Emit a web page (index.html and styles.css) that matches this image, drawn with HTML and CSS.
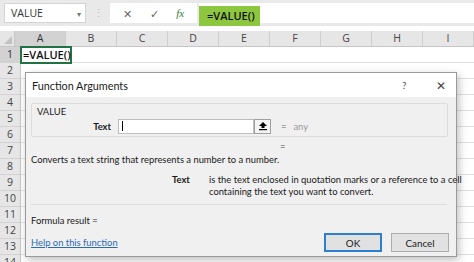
FILE: index.html
```html
<!DOCTYPE html>
<html lang="en">
<head>
    <meta charset="UTF-8">
    <title>Function Arguments</title>
    <link rel="stylesheet" href="styles.css">
</head>
<body>
    <div class="toolbar">
        <div class="namebox">
            <span>VALUE</span>
            <span class="drop">&#9662;</span>
        </div>
        <div class="grip">&#8942;</div>
        <div class="fxbox">
            <span class="ico">&#10005;</span>
            <span class="ico">&#10003;</span>
            <span class="ico fx">fx</span>
        </div>
        <div class="formula">
            <span class="hl">=VALUE()</span>
        </div>
    </div>

    <div class="sheet">
        <div class="colhead">
            <div class="corner"><span class="tri"></span></div>
            <div class="col sel">A</div>
            <div class="col">B</div>
            <div class="col">C</div>
            <div class="col">D</div>
            <div class="col">E</div>
            <div class="col">F</div>
            <div class="col">G</div>
            <div class="col">H</div>
            <div class="col">I</div>
        </div>
        <div class="rows" id="rows"></div>
        <div class="active">=VALUE()</div>

        <div class="dialog">
            <div class="titlebar">
                <span>Function Arguments</span>
                <span class="q">?</span>
                <span class="x">&#10005;</span>
            </div>
            <div class="body">
                <div class="group">
                    <div class="glabel">VALUE</div>
                    <div class="arg">
                        <span class="argname">Text</span>
                        <div class="input"><span class="caret"></span></div>
                        <div class="pick">
                            <svg width="10" height="10" viewBox="0 0 10 10">
                                <path d="M5 1 L9 5 L6.5 5 L6.5 7 L3.5 7 L3.5 5 L1 5 Z" fill="#000"/>
                                <rect x="1" y="8" width="8" height="1.2" fill="#000"/>
                            </svg>
                        </div>
                        <span class="eq">=</span>
                        <span class="any">any</span>
                    </div>
                </div>
                <div class="eq2">=</div>
                <div class="desc">Converts a text string that represents a number to a number.</div>
                <div class="argdesc">
                    <span class="argb">Text</span>
                    <span>is the text enclosed in quotation marks or a reference to a cell<br>containing the text you want to convert.</span>
                </div>
                <div class="sep"></div>
                <div class="result">Formula result =</div>
                <div class="foot">
                    <a href="#" class="help">Help on this function</a>
                    <button class="btn ok">OK</button>
                    <button class="btn">Cancel</button>
                </div>
            </div>
        </div>
    </div>

    <script>
        const rows = document.getElementById('rows');
        for (let i = 1; i <= 14; i++) {
            const r = document.createElement('div');
            r.className = 'row';
            r.innerHTML = `<div class="rowhead${i === 1 ? ' sel' : ''}">${i}</div>`;
            rows.appendChild(r);
        }
    </script>
</body>
</html>
```

FILE: styles.css
```css
body {
    margin: 0;
    width: 474px;
    height: 262px;
    overflow: hidden;
    background: #fff;
    font-family: "Open Sans", "Noto Sans", sans-serif;
    color: #222;
}
.toolbar {
    height: 26px;
    background: #e9e9e9;
    display: flex;
    align-items: flex-start;
    padding-top: 3px;
    box-sizing: border-box;
}
.namebox {
    margin-left: 4px;
    width: 82px;
    height: 20px;
    background: #fff;
    border: 1px solid #d4d4d4;
    box-sizing: border-box;
    display: flex;
    align-items: center;
    justify-content: space-between;
    padding: 0 4px 0 6px;
    font-size: 10.5px;
    color: #333;
}
.drop {
    font-size: 8px;
    color: #777;
}
.grip {
    width: 24px;
    text-align: center;
    color: #bbb;
    font-size: 11px;
    line-height: 20px;
}
.fxbox {
    width: 87px;
    height: 20px;
    background: #fff;
    display: flex;
    align-items: center;
    justify-content: space-around;
    padding: 0 4px;
    box-sizing: border-box;
}
.ico {
    color: #666;
    font-size: 11px;
}
.fx {
    color: #3a7d3a;
    font-style: italic;
    font-family: "Liberation Serif", serif;
    font-size: 11px;
}
.formula {
    flex: 1;
    height: 20px;
    margin-left: 2px;
    background: #fff;
}
.hl {
    display: inline-block;
    height: 20px;
    line-height: 20px;
    padding: 0 5px 0 8px;
    background: #8dc63f;
    font-size: 11px;
    font-weight: 600;
    color: #111;
}
.sheet {
    position: relative;
    margin-top: 5px;
}
.colhead {
    display: flex;
    height: 16px;
    background: #e6e6e6;
    border-bottom: 1px solid #c6c6c6;
    box-sizing: border-box;
}
.corner {
    width: 21px;
    position: relative;
    border-right: 1px solid #c6c6c6;
    box-sizing: border-box;
}
.tri {
    position: absolute;
    right: 2px;
    bottom: 2px;
    border-left: 8px solid transparent;
    border-bottom: 8px solid #c2c2c2;
}
.col {
    width: 51px;
    flex: none;
    text-align: center;
    font-size: 10.5px;
    line-height: 15px;
    color: #444;
    border-right: 1px solid #cfcfcf;
    box-sizing: border-box;
}
.col.sel {
    background: #d2d2d2;
    color: #333;
}
.row {
    height: 16px;
    border-bottom: 1px solid #e2e2e2;
    box-sizing: border-box;
}
.rowhead {
    width: 21px;
    height: 16px;
    background: #e6e6e6;
    border-right: 1px solid #c6c6c6;
    border-bottom: 1px solid #d2d2d2;
    box-sizing: border-box;
    text-align: center;
    font-size: 10.5px;
    line-height: 15px;
    color: #444;
}
.rowhead.sel {
    background: #d2d2d2;
    color: #333;
}
.active {
    position: absolute;
    left: 20px;
    top: 15px;
    width: 52px;
    height: 18px;
    border: 2px solid #217346;
    box-sizing: border-box;
    font-size: 11px;
    font-weight: 600;
    line-height: 14px;
    padding-left: 1px;
    color: #111;
    background: #fff;
}
.dialog {
    position: absolute;
    left: 25px;
    top: 41px;
    width: 432px;
    height: 185px;
    border: 1px solid #9a9a9a;
    box-sizing: border-box;
    background: #f0f0f0;
    box-shadow: 2px 3px 8px rgba(0,0,0,0.25);
    font-family: Lato, "Open Sans", sans-serif;
    font-size: 9.4px;
    color: #1a1a1a;
}
.titlebar {
    height: 24px;
    background: #fff;
    display: flex;
    align-items: center;
    padding: 0 0 0 6px;
    font-size: 10.8px;
}
.titlebar span:first-child {
    flex: 1;
}
.q {
    width: 34px;
    color: #555;
    font-size: 10px;
}
.x {
    width: 20px;
    color: #444;
    font-size: 12px;
}
.body {
    padding: 6px 6px 0 5px;
}
.group {
    border: 1px solid #dcdcdc;
    border-radius: 2px;
    height: 34px;
    box-sizing: border-box;
    padding: 2px 5px;
    margin-right: 2px;
}
.glabel {
    line-height: 12px;
}
.arg {
    display: flex;
    align-items: center;
    height: 16px;
}
.argname {
    width: 74px;
    text-align: right;
    font-weight: 700;
    padding-right: 7px;
}
.input {
    width: 136px;
    height: 15px;
    background: #fff;
    border: 1px solid #bdbdbd;
    box-sizing: border-box;
    display: flex;
    align-items: center;
    padding-left: 3px;
}
.caret {
    width: 1px;
    height: 10px;
    background: #000;
}
.pick {
    width: 17px;
    height: 15px;
    border: 1px solid #a0a0a0;
    background: #f4f4f4;
    box-sizing: border-box;
    display: flex;
    align-items: center;
    justify-content: center;
}
.eq {
    margin-left: 10px;
    color: #666;
}
.any {
    margin-left: 7px;
    color: #9a9a9a;
}
.eq2 {
    margin-top: 4px;
    padding-left: 249px;
    height: 12px;
    line-height: 12px;
    color: #444;
}
.desc {
    margin-top: 1px;
    line-height: 12px;
}
.argdesc {
    display: flex;
    margin-top: 8px;
    margin-right: -6px;
    padding-left: 141px;
    line-height: 12px;
    white-space: nowrap;
}
.argb {
    font-weight: 700;
    width: 37px;
    flex: none;
}
.sep {
    height: 1px;
    background: #dcdcdc;
    margin: 6px 3px 0 0;
}
.result {
    margin-top: 10px;
    line-height: 12px;
}
.foot {
    display: flex;
    align-items: center;
    margin-top: 6px;
}
.help {
    flex: 1;
    color: #2a6bb5;
}
.btn {
    width: 58px;
    height: 19px;
    margin-left: 9px;
    border: 1px solid #adadad;
    background: #e1e1e1;
    font-family: inherit;
    font-size: 9.8px;
    color: #1a1a1a;
    padding: 0;
}
.btn.ok {
    border: 2px solid #2c7fcf;
}
.btn:last-child {
    margin-right: 1px;
}
```
